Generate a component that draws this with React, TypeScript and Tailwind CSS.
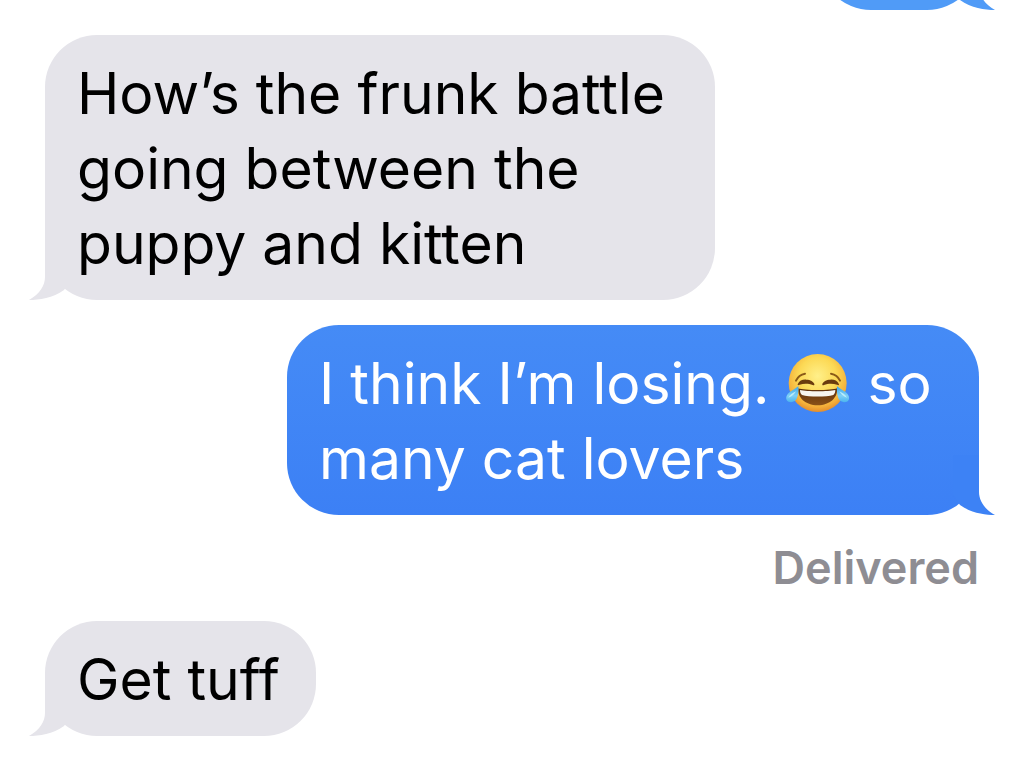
import type { ReactNode } from "react";
import clsx from "clsx";

function JoyEmoji() {
  return (
    <svg role="img" aria-label="face with tears of joy" viewBox="42 37 198 180" className="inline-block h-[60px] w-[66px] align-[-9px]">
      <defs>
        <radialGradient id="face" cx="0.5" cy="0.38" r="0.64">
          <stop offset="0" stopColor="#fff08a" />
          <stop offset="0.5" stopColor="#fcd955" />
          <stop offset="0.82" stopColor="#f4b03a" />
          <stop offset="1" stopColor="#e0852a" />
        </radialGradient>
        <linearGradient id="mouth" x1="0" y1="0" x2="0" y2="1">
          <stop offset="0" stopColor="#5c2f0c" />
          <stop offset="1" stopColor="#8a5118" />
        </linearGradient>
        <linearGradient id="tear" x1="0" y1="0" x2="0" y2="1">
          <stop offset="0" stopColor="#3ba6ea" />
          <stop offset="0.6" stopColor="#7fd0f7" />
          <stop offset="1" stopColor="#4ab4ee" />
        </linearGradient>
      </defs>
      <circle cx="140" cy="127" r="87" fill="url(#face)" />
      <g fill="none" stroke="#8a5a18" strokeLinecap="round">
        <path d="M75 120C80 109 90 101 102 99" strokeWidth="6" />
        <path d="M207 120C202 109 192 101 180 99" strokeWidth="6" />
      </g>
      <g fill="#6b3c0e">
        <path d="M80 131C85 120 95 116 106 117C118 117 128 123 130 130C131 134 128 135 125 133C113 128 98 128 86 132C82 134 79 134 80 131Z" />
        <path d="M204 131C199 120 189 116 178 117C166 117 156 123 154 130C153 134 156 135 159 133C171 128 186 128 198 132C202 134 205 134 204 131Z" />
      </g>
      <path d="M82 143C98 150 182 150 198 143C201 170 178 194 140 194C102 194 79 170 82 143Z" fill="url(#mouth)" />
      <path d="M87 148C108 153 172 153 193 148C193 155 191 160 187 163C166 169 114 169 93 163C89 160 87 155 87 148Z" fill="#f7f5ef" />
      <path d="M82 137C83 151 82 169 74 179C67 186 52 187 47 178C42 168 51 157 61 151C69 146 77 141 82 137Z" fill="url(#tear)" />
      <path d="M198 137C197 151 198 169 206 179C213 186 228 187 233 178C238 168 229 157 219 151C211 146 203 141 198 137Z" fill="url(#tear)" />
      <path d="M52 171C57 162 66 156 75 152C70 160 64 168 52 171Z" fill="#b9ecfb" />
      <path d="M228 171C223 162 214 156 205 152C210 160 216 168 228 171Z" fill="#b9ecfb" />
    </svg>
  );
}

function Tail({ className }: { className: string }) {
  return (
    <svg aria-hidden="true" viewBox="0 0 50 60" className={clsx("absolute bottom-0 h-[60px] w-[50px]", className)}>
      <path d="M34 0V37C34 45 39 54 50 60C40 60 26 58 15 50L8 40V0Z" fill="currentColor" />
    </svg>
  );
}

function Bubble({ sent, className, tail, children }: { sent?: boolean; className: string; tail: string; children?: ReactNode }) {
  return (
    <div className={clsx("relative rounded-[52px] pt-[21px] pr-9 pb-[19px] pl-8", sent ? "self-end" : "self-start", className)}>
      <Tail className={clsx(sent ? "-right-4" : "-left-4 -scale-x-100", tail)} />
      <p className="relative">{children}</p>
    </div>
  );
}

export default function App() {
  return (
    <main className="flex min-h-screen flex-col bg-white px-[45px] font-['Inter',sans-serif] text-[57px] leading-[75px] text-black">
      {/* tail end of the previous message, scrolled off the top */}
      <div className="-mr-4 flex h-[10px] flex-col justify-end overflow-hidden pr-4">
        <Bubble sent className="h-[115px] w-[160px] shrink-0 bg-[#509bf7]" tail="text-[#509bf7]" />
      </div>
      <div className="flex flex-col gap-[25px] pt-[25px]">
        <Bubble className="max-w-[670px] bg-[#e5e4ea]" tail="text-[#e5e4ea]">
          How’s the frunk battle going between the puppy and kitten
        </Bubble>
        <Bubble sent className="max-w-[692px] bg-linear-to-b from-[#458bf6] to-[#3c80f5] text-white" tail="text-[#3d82f5]">
          <span>I think I’m losing. </span>
          <JoyEmoji />
          <span> so</span> <span>many cat lovers</span>
        </Bubble>
      </div>
      <p className="py-6 text-right text-[45px] font-semibold leading-[58px] text-[#8e8d93]">Delivered</p>
      <Bubble className="bg-[#e5e4ea]" tail="text-[#e5e4ea]">Get tuff</Bubble>
    </main>
  );
}
